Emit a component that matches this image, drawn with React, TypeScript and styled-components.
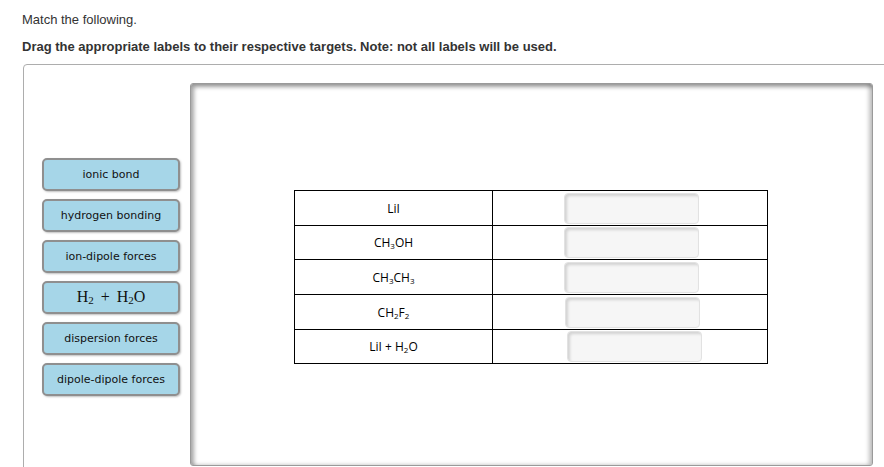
import React from 'react';
import styled, { createGlobalStyle } from 'styled-components';

const GlobalStyle = createGlobalStyle`
  html, body {
    margin: 0;
    padding: 0;
    background: #fff;
    overflow: hidden;
  }
  body {
    font-family: "Liberation Sans", Arial, sans-serif;
    color: #333;
  }
`;

const Page = styled.div`
  padding: 12px 0 0 22px;
`;

const Intro = styled.p`
  margin: 0;
  font-size: 13px;
  line-height: 15px;
`;

const Instructions = styled.p`
  margin: 12px 0 0;
  font-size: 13px;
  line-height: 15px;
  font-weight: bold;
`;

const Workspace = styled.div`
  margin: 10px 0 0 1px;
  width: 900px;
  height: 420px;
  border: 1px solid #adadad;
  border-radius: 4px;
  box-sizing: border-box;
  padding: 18px 0 0 18px;
  display: flex;
  gap: 10px;
`;

const LabelColumn = styled.div`
  width: 138px;
  padding-top: 75px;
  display: flex;
  flex-direction: column;
  gap: 8px;
`;

const Label = styled.div<{ $math?: boolean }>`
  height: 33px;
  box-sizing: border-box;
  border: 2px solid #8f8f8f;
  border-radius: 5px;
  background: #a6d6e8;
  box-shadow: 1px 1px 2px rgba(0, 0, 0, 0.25);
  display: flex;
  align-items: center;
  justify-content: center;
  color: #111;
  font-family: ${({ $math }) =>
    $math ? '"Liberation Serif", "DejaVu Serif", serif' : '"DejaVu Sans", Verdana, sans-serif'};
  font-size: ${({ $math }) => ($math ? '16px' : '11px')};
  padding-bottom: 1px;
`;

const MathSep = styled.span`
  margin: 0 7px;
`;

const Canvas = styled.div`
  width: 683px;
  height: 383px;
  box-sizing: border-box;
  border: 1px solid #9a9a9a;
  border-radius: 3px;
  box-shadow: inset 3px 3px 4px rgba(0, 0, 0, 0.35), inset -3px 0 4px rgba(0, 0, 0, 0.25);
  padding: 106px 0 0 103px;
`;

const Table = styled.table`
  border-collapse: collapse;
  font-family: "Open Sans", "DejaVu Sans", sans-serif;
  font-size: 12px;
  color: #000;
`;

const NameCell = styled.td<{ $h: number }>`
  width: 198px;
  height: ${({ $h }) => $h}px;
  box-sizing: border-box;
  padding: 0;
  border: 1px solid #000;
  text-align: center;
  vertical-align: middle;
`;

const TargetCell = styled.td`
  width: 274px;
  padding: 0;
  border: 1px solid #000;
  vertical-align: middle;
`;

const TargetRow = styled.div<{ $shift: number }>`
  display: flex;
  padding-left: ${({ $shift }) => 71 + $shift}px;
`;

const DropTarget = styled.div`
  width: 135px;
  height: 31px;
  box-sizing: border-box;
  background: #f6f6f6;
  border: 1px solid #e2e2e2;
  border-radius: 4px;
  box-shadow: inset 2px 2px 3px rgba(0, 0, 0, 0.15);
`;

const Sub = styled.sub`
  font-size: 8px;
  line-height: 0;
  vertical-align: -2px;
`;

const MathSub = styled.span`
  font-size: 11px;
  line-height: 0;
  position: relative;
  top: 3px;
`;

const labels: { text: React.ReactNode; math?: boolean }[] = [
  { text: 'ionic bond' },
  { text: 'hydrogen bonding' },
  { text: 'ion-dipole forces' },
  {
    math: true,
    text: (
      <>
        H<MathSub>2</MathSub>
        <MathSep>+</MathSep>H<MathSub>2</MathSub>O
      </>
    ),
  },
  { text: 'dispersion forces' },
  { text: 'dipole-dipole forces' },
];

const rows: { name: React.ReactNode; shift: number; h: number }[] = [
  { name: 'LiI', shift: 0, h: 35 },
  { name: <>CH<Sub>3</Sub>OH</>, shift: 0, h: 34 },
  { name: <>CH<Sub>3</Sub>CH<Sub>3</Sub></>, shift: 0, h: 35 },
  { name: <>CH<Sub>2</Sub>F<Sub>2</Sub></>, shift: 1, h: 35 },
  { name: <>LiI + H<Sub>2</Sub>O</>, shift: 3, h: 34 },
];

export default function App() {
  return (
    <>
      <GlobalStyle />
      <Page>
        <Intro>Match the following.</Intro>
        <Instructions>
          Drag the appropriate labels to their respective targets. Note: not all labels will be used.
        </Instructions>
        <Workspace>
          <LabelColumn>
            {labels.map((l, i) => (
              <Label key={i} $math={l.math}>
                {l.text}
              </Label>
            ))}
          </LabelColumn>
          <Canvas>
            <Table>
              <tbody>
                {rows.map((r, i) => (
                  <tr key={i}>
                    <NameCell $h={r.h}>{r.name}</NameCell>
                    <TargetCell>
                      <TargetRow $shift={r.shift}>
                        <DropTarget />
                      </TargetRow>
                    </TargetCell>
                  </tr>
                ))}
              </tbody>
            </Table>
          </Canvas>
        </Workspace>
      </Page>
    </>
  );
}
